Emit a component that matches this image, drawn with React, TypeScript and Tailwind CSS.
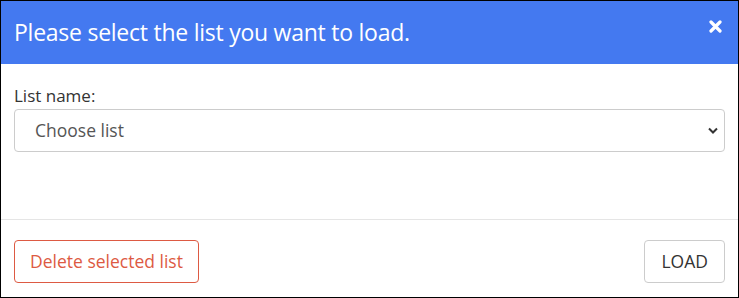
export default function App() {
  return (
    <div
      className="flex h-[298px] w-[739px] flex-col border border-black bg-white"
      style={{ fontFamily: '"Open Sans", "Noto Sans", sans-serif' }}
    >
      <div className="flex h-[63px] items-center justify-between bg-[#4479f0] pl-[13px] pr-[16px]">
        <h2 className="text-[23px] font-normal tracking-[-0.25px] text-white">
          Please select the list you want to load.
        </h2>
        <button className="mb-[12px] text-white">
          <svg width="13" height="13" viewBox="0 0 13 13">
            <path d="M2 2 11 11M11 2 2 11" stroke="currentColor" strokeWidth="3.2" strokeLinecap="round" />
          </svg>
        </button>
      </div>

      <div className="flex h-[155px] flex-col px-[13px] pt-[20px]">
        <label className="text-[17px] leading-[23px] text-[#333]">List name:</label>
        <div className="relative mt-[2px]">
          <select className="h-[43px] w-full appearance-none rounded-[4px] border border-[#ccc] bg-white pl-[20px] text-[17.5px] text-[#555] outline-none">
            <option>Choose list</option>
          </select>
          <svg
            className="pointer-events-none absolute right-[6px] top-[17px]"
            width="12"
            height="9"
            viewBox="0 0 12 9"
          >
            <path d="M2 2.5 6 6.5 10 2.5" fill="none" stroke="#333" strokeWidth="2" />
          </svg>
        </div>
      </div>

      <div className="flex flex-1 items-start justify-between border-t border-[#e5e5e5] px-[13px] pt-[20px]">
        <button className="h-[43px] rounded-[4px] border border-[#dd5a43] px-[15px] text-[17.5px] text-[#dd5a43]">
          Delete selected list
        </button>
        <button className="h-[43px] rounded-[4px] border border-[#ccc] px-[16px] text-[17.5px] text-[#333]">
          LOAD
        </button>
      </div>
    </div>
  );
}
